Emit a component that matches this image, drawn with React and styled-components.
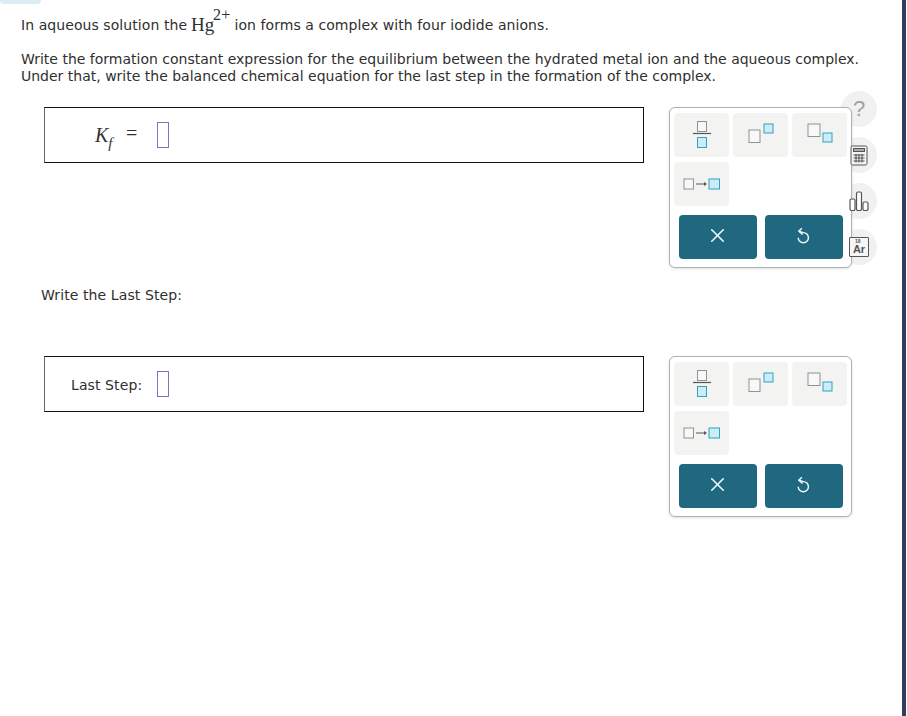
import React from "react";
import styled, { createGlobalStyle } from "styled-components";
import { X } from "lucide-react";

const GlobalStyle = createGlobalStyle`
  html, body {
    margin: 0;
    padding: 0;
    background: #fff;
  }
`;

const Page = styled.div`
  position: relative;
  box-sizing: border-box;
  width: 906px;
  height: 716px;
  padding: 0 0 0 21px;
  border-right: 4px solid #2f3f5c;
  background: #fff;
  color: #2f2f2f;
  font-family: "DejaVu Sans", Verdana, sans-serif;
  font-size: 14px;
  overflow: hidden;
`;

const TopTab = styled.div`
  position: absolute;
  left: 0;
  top: 0;
  width: 41px;
  height: 4px;
  background: #dcecf2;
  border-radius: 0 0 10px 10px;
`;

const Intro = styled.p`
  margin: 0;
  height: 41px;
  display: flex;
  align-items: flex-end;
  box-sizing: border-box;
  padding-bottom: 8px;
  white-space: pre;
  letter-spacing: 0.07px;
`;

const Hg = styled.span`
  font-family: "Liberation Serif", serif;
  font-size: 19px;
  margin-left: 4px;
  position: relative;
  line-height: 17px;
`;

const Charge = styled.sup`
  position: absolute;
  left: 22px;
  top: -8px;
  font-family: "Liberation Serif", serif;
  font-size: 16px;
  line-height: 14px;
`;

const IntroTail = styled.span`
  margin-left: 20px;
`;

const Instructions = styled.p`
  margin: 10px 0 0;
  height: 37px;
  line-height: 17px;
  white-space: pre;
`;

const AnswerRow = styled.div`
  position: relative;
  display: flex;
  align-items: flex-start;
  padding-left: 23px;
  gap: 25px;
  margin-top: ${(p) => p.$top}px;
`;

const AnswerBox = styled.div`
  box-sizing: border-box;
  width: 600px;
  height: 56px;
  display: flex;
  align-items: center;
  padding-left: ${(p) => p.$indent}px;
  border: 1px solid #111;
  border-left-color: #666;
`;

const Kf = styled.span`
  font-family: "Liberation Serif", serif;
  font-style: italic;
  font-size: 20px;
  color: #333;
  width: 31px;
  white-space: pre;
`;

const KfSub = styled.sub`
  font-size: 15px;
  line-height: 0;
  vertical-align: -6px;
`;

const Equals = styled.span`
  font-family: "Liberation Serif", serif;
  font-size: 20px;
  width: 31px;
  padding-bottom: 4px;
`;

const Label = styled.span`
  width: 86px;
  padding-top: 2px;
  letter-spacing: 0.1px;
`;

const Slot = styled.span`
  box-sizing: border-box;
  display: block;
  width: 12px;
  height: 26px;
  border: 1.5px solid #7d74c9;
  background: #fff;
`;

const Palette = styled.div`
  position: relative;
  z-index: 1;
  box-sizing: border-box;
  width: 183px;
  height: 161px;
  padding: 5px 3px 0 4px;
  border: 1px solid #a9b3b5;
  border-radius: 6px;
  background: #fff;
  box-shadow: 0 1px 3px rgba(0, 0, 0, 0.12);
`;

const TemplateGrid = styled.div`
  display: grid;
  grid-template-columns: 55px 55px 55px;
  grid-auto-rows: 44px;
  gap: 5px 4px;
`;

const TemplateButton = styled.button`
  display: flex;
  align-items: center;
  justify-content: center;
  padding: 0;
  border: 0;
  border-radius: 4px;
  background: #f3f3f2;
`;

const Actions = styled.div`
  display: flex;
  gap: 8px;
  margin: 9px 0 0 5px;
`;

const ActionButton = styled.button`
  display: flex;
  align-items: center;
  justify-content: center;
  box-sizing: border-box;
  width: 78px;
  height: 44px;
  padding: 0 ${(p) => p.$nudge || 0}px 4px 0;
  border: 0;
  border-radius: 4px;
  background: #1f6880;
  color: #f2fbfd;
`;

const SideTools = styled.div`
  position: absolute;
  left: 820px;
  top: -16px;
  display: flex;
  flex-direction: column;
  gap: 10px;
`;

/* the disc sits behind the palette, the icon on top of it */
const ToolCircle = styled.div`
  position: relative;
  width: 36px;
  height: 36px;
  display: flex;
  align-items: center;
  justify-content: center;

  &::before {
    content: "";
    position: absolute;
    inset: 0;
    border-radius: 50%;
    background: #f1f1f1;
  }
`;

const ToolIcon = styled.div`
  position: relative;
  z-index: 2;
  display: flex;
  color: #9aa2a6;
  font-family: "Liberation Sans", sans-serif;
  font-size: 22px;
`;

const Prompt = styled.p`
  margin: 19px 0 0 20px;
  line-height: 17px;
  letter-spacing: 0.1px;
`;

const grey = "#8f9393";
const blue = "#2fa3c4";
const blueFill = "#cdecf5";

const Fraction = () => (
  <svg width="18" height="28" viewBox="0 0 18 28">
    <rect x="4.5" y="0.5" width="9" height="10" fill="#f8f8f8" stroke={grey} />
    <path d="M0 12.5h18" stroke="#555" strokeWidth="1.2" />
    <rect x="4.5" y="16.5" width="9" height="10" fill={blueFill} stroke={blue} />
  </svg>
);

const Superscript = () => (
  <svg width="26" height="25" viewBox="0 0 26 25">
    <rect x="1" y="7" width="11" height="12.5" fill="#f8f8f8" stroke={grey} />
    <rect x="16" y="1" width="9" height="9" fill={blueFill} stroke={blue} />
  </svg>
);

const Subscript = () => (
  <svg width="26" height="24" viewBox="0 0 26 24">
    <rect x="1" y="1" width="12" height="12.5" fill="#f8f8f8" stroke={grey} />
    <rect x="16" y="10" width="9" height="9" fill={blueFill} stroke={blue} />
  </svg>
);

const Arrow = () => (
  <svg width="38" height="14" viewBox="0 0 38 14">
    <rect x="1" y="2" width="9.5" height="10" fill="#f8f8f8" stroke={grey} />
    <path d="M13 7h8" stroke="#555" strokeWidth="1" />
    <path d="M24 7l-3-2v4z" fill="#555" />
    <rect x="26" y="2" width="10.5" height="10" fill={blueFill} stroke={blue} />
  </svg>
);

const Undo = () => (
  <svg width="13" height="17" viewBox="0 0 15 20" fill="none" stroke="currentColor" strokeWidth="1.7">
    <path d="M2 5l5.3 1.6a6 6 0 1 1-6 6" />
    <path d="M5.5 1.5L2 5l4.5 3.8" />
  </svg>
);

const Calculator = () => (
  <svg width="18" height="21" viewBox="0 0 18 21" fill="none" stroke="#555">
    <rect x="1" y="1" width="16" height="19" rx="1.5" fill="#f4f4f4" />
    <rect x="3.5" y="3.5" width="11" height="3" fill="#aaa" />
    <path
      d="M3.5 10h11M3.5 13h11M3.5 16h11M6 9v8.5M9 9v8.5M12 9v8.5"
      strokeWidth="1.1"
    />
  </svg>
);

const Bars = () => (
  <svg width="20" height="20" viewBox="0 0 20 20" fill="#fff" stroke="#555" strokeWidth="1.2">
    <rect x="1" y="8" width="5" height="11.5" rx="1.5" />
    <rect x="7.5" y="1" width="5" height="18.5" rx="1.5" />
    <rect x="14" y="11" width="5" height="8.5" rx="1.5" />
  </svg>
);

const PeriodicBox = styled.div`
  box-sizing: border-box;
  width: 20px;
  height: 20px;
  border: 1.5px solid #555;
  border-radius: 1px;
  background: #f6f6f6;
  color: #555;
  font-family: "Liberation Sans", sans-serif;
  font-weight: bold;
  font-size: 11px;
  line-height: 11px;
  text-align: center;
  padding-top: 6px;
  position: relative;
`;

const PeriodicNum = styled.span`
  position: absolute;
  left: 5px;
  top: 0;
  font-size: 5px;
  line-height: 6px;
`;

function MathPalette() {
  return (
    <Palette>
      <TemplateGrid>
        <TemplateButton><Fraction /></TemplateButton>
        <TemplateButton><Superscript /></TemplateButton>
        <TemplateButton><Subscript /></TemplateButton>
        <TemplateButton><Arrow /></TemplateButton>
      </TemplateGrid>
      <Actions>
        <ActionButton $nudge={2}><X size={23} strokeWidth={1.6} /></ActionButton>
        <ActionButton $nudge={1}><Undo /></ActionButton>
      </Actions>
    </Palette>
  );
}

export default function App() {
  return (
    <>
      <GlobalStyle />
      <Page>
        <TopTab />
        <Intro>
          In aqueous solution the
          <Hg>
            Hg<Charge>2+</Charge>
          </Hg>
          <IntroTail>ion forms a complex with four iodide anions.</IntroTail>
        </Intro>
        <Instructions>
          {"Write the formation constant expression for the equilibrium between the hydrated metal ion and the aqueous complex.\nUnder that, write the balanced chemical equation for the last step in the formation of the complex."}
        </Instructions>

        <AnswerRow $top={19}>
          <AnswerBox $indent={50}>
            <Kf>
              K<KfSub>f</KfSub>
            </Kf>
            <Equals>=</Equals>
            <Slot />
          </AnswerBox>
          <MathPalette />
          <SideTools>
            <ToolCircle><ToolIcon>?</ToolIcon></ToolCircle>
            <ToolCircle><ToolIcon><Calculator /></ToolIcon></ToolCircle>
            <ToolCircle><ToolIcon><Bars /></ToolIcon></ToolCircle>
            <ToolCircle>
              <ToolIcon>
                <PeriodicBox>
                  <PeriodicNum>18</PeriodicNum>
                  Ar
                </PeriodicBox>
              </ToolIcon>
            </ToolCircle>
          </SideTools>
        </AnswerRow>

        <Prompt>Write the Last Step:</Prompt>

        <AnswerRow $top={52}>
          <AnswerBox $indent={26}>
            <Label>Last Step:</Label>
            <Slot />
          </AnswerBox>
          <MathPalette />
        </AnswerRow>
      </Page>
    </>
  );
}
